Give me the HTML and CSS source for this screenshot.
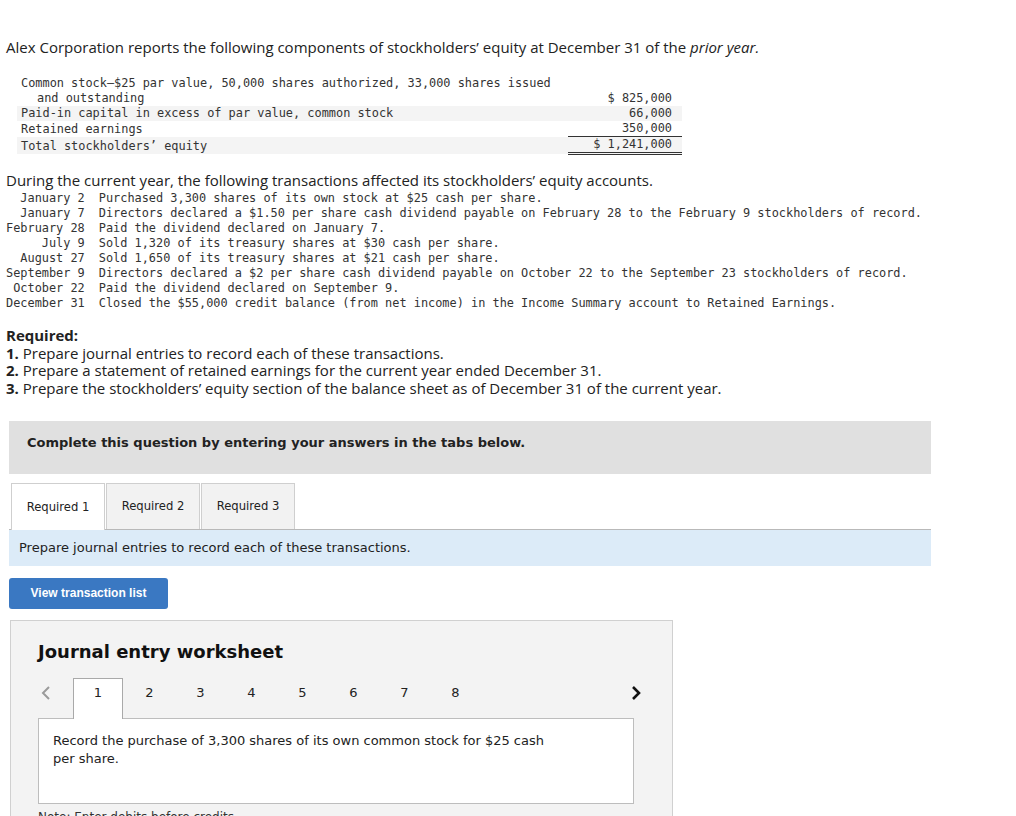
FILE: index.html
```html
<!DOCTYPE html>
<html lang="en">
<head>
<meta charset="utf-8">
<title>Alex Corporation</title>
<link rel="stylesheet" href="styles.css">
</head>
<body>
<main class="page">
  <p class="intro">Alex Corporation reports the following components of stockholders’ equity at December 31 of the <i>prior year.</i></p>

  <table class="equity">
    <colgroup><col class="col-label"><col class="col-amt"></colgroup>
    <tr>
      <td class="label">Common stock—$25 par value, 50,000 shares authorized, 33,000 shares issued<br><span class="indent">and outstanding</span></td>
      <td class="amt">$ 825,000</td>
    </tr>
    <tr class="stripe">
      <td class="label">Paid-in capital in excess of par value, common stock</td>
      <td class="amt">66,000</td>
    </tr>
    <tr>
      <td class="label">Retained earnings</td>
      <td class="amt under">350,000</td>
    </tr>
    <tr class="stripe">
      <td class="label">Total stockholders’ equity</td>
      <td class="amt double">$ 1,241,000</td>
    </tr>
  </table>

  <p class="during">During the current year, the following transactions affected its stockholders’ equity accounts.</p>
  <div class="tx">
    <span class="date">January 2</span><span>Purchased 3,300 shares of its own stock at $25 cash per share.</span>
    <span class="date">January 7</span><span>Directors declared a $1.50 per share cash dividend payable on February 28 to the February 9 stockholders of record.</span>
    <span class="date">February 28</span><span>Paid the dividend declared on January 7.</span>
    <span class="date">July 9</span><span>Sold 1,320 of its treasury shares at $30 cash per share.</span>
    <span class="date">August 27</span><span>Sold 1,650 of its treasury shares at $21 cash per share.</span>
    <span class="date">September 9</span><span>Directors declared a $2 per share cash dividend payable on October 22 to the September 23 stockholders of record.</span>
    <span class="date">October 22</span><span>Paid the dividend declared on September 9.</span>
    <span class="date">December 31</span><span>Closed the $55,000 credit balance (from net income) in the Income Summary account to Retained Earnings.</span>
  </div>

  <div class="required">
    <p class="req-title">Required:</p>
    <p><b>1.</b> Prepare journal entries to record each of these transactions.</p>
    <p><b>2.</b> Prepare a statement of retained earnings for the current year ended December 31.</p>
    <p><b>3.</b> Prepare the stockholders’ equity section of the balance sheet as of December 31 of the current year.</p>
  </div>

  <section class="widget">
    <div class="complete">Complete this question by entering your answers in the tabs below.</div>

    <div class="tabs">
      <div class="tab active">Required 1</div>
      <div class="tab">Required 2</div>
      <div class="tab">Required 3</div>
    </div>
    <div class="infobar">Prepare journal entries to record each of these transactions.</div>

    <button class="btn" type="button">View transaction list</button>

    <div class="worksheet">
      <h2 class="ws-title">Journal entry worksheet</h2>
      <div class="ws-nav">
        <span class="arrow prev"><svg width="12" height="16" viewBox="0 0 12 16"><path d="M9 2 L3 8 L9 14" fill="none" stroke="#9a9a9a" stroke-width="2"/></svg></span>
        <div class="ws-tabs">
          <span class="ws-tab active">1</span>
          <span class="ws-tab">2</span>
          <span class="ws-tab">3</span>
          <span class="ws-tab">4</span>
          <span class="ws-tab">5</span>
          <span class="ws-tab">6</span>
          <span class="ws-tab">7</span>
          <span class="ws-tab">8</span>
        </div>
        <span class="arrow next"><svg width="12" height="16" viewBox="0 0 12 16"><path d="M3 2 L9 8 L3 14" fill="none" stroke="#111" stroke-width="2.6"/></svg></span>
      </div>
      <div class="ws-box">
        <p>Record the purchase of 3,300 shares of its own common stock for $25 cash per share.</p>
      </div>
      <p class="note">Note: Enter debits before credits.</p>
    </div>
  </section>
</main>
</body>
</html>
```

FILE: styles.css
```css
* { box-sizing: border-box; }

html, body {
  margin: 0;
  padding: 0;
  background: #fff;
  overflow: hidden;
}

body {
  font-family: "Open Sans", "Liberation Sans", Arial, sans-serif;
  color: #222;
}

.page {
  padding: 38px 0 0 6px;
  height: 816px;
  overflow: hidden;
}

p { margin: 0; }

.intro {
  font-size: 15px;
  line-height: 18px;
}

.equity {
  margin: 20px 0 0 11px;
  border-collapse: collapse;
  table-layout: fixed;
  width: 665px;
  font-family: "DejaVu Sans Mono", monospace;
  font-size: 11.9px;
  line-height: 15px;
  color: #333;
}
.col-label { width: 551px; }
.col-amt { width: 114px; }

.equity td {
  padding: 0;
  vertical-align: bottom;
}
.equity .label { padding-left: 4px; white-space: nowrap; }
.equity .indent { padding-left: 16px; }
.equity .amt { text-align: right; padding-right: 10px; }
.equity .stripe td { background: #f4f4f4; }
.equity .under { border-bottom: 1px solid #333; }
.equity .double { border-bottom: 3px double #333; }

.during {
  margin-top: 16px;
  font-size: 15px;
  line-height: 18px;
}

.tx {
  margin-top: 2px;
  display: grid;
  grid-template-columns: max-content 1fr;
  column-gap: 14px;
  font-family: "DejaVu Sans Mono", monospace;
  font-size: 11.9px;
  line-height: 15px;
  color: #333;
}
.tx .date { text-align: right; white-space: nowrap; }

.required {
  margin-top: 16px;
  font-size: 15px;
  line-height: 17.7px;
}
.req-title { font-weight: bold; }

.widget {
  margin: 23px 0 0 3px;
  width: 922px;
  font-family: "DejaVu Sans", Verdana, sans-serif;
  color: #222;
}

.complete {
  background: #e0e0e0;
  height: 53px;
  padding: 14px 0 0 18px;
  font-size: 13px;
  line-height: 16px;
  font-weight: bold;
}

.tabs {
  margin-top: 9px;
  display: flex;
  gap: 1px;
  padding-left: 2px;
  border-bottom: 1px solid #b9b9b9;
  height: 47px;
}
.tab {
  width: 94px;
  height: 46px;
  display: flex;
  align-items: center;
  justify-content: center;
  font-size: 11.6px;
  background: #f2f2f2;
  border: 1px solid #cfcfcf;
  border-bottom: none;
}
.tab.active {
  background: #fff;
  height: 47px;
  position: relative;
  z-index: 1;
}

.infobar {
  background: #dcebf8;
  height: 36px;
  padding-left: 10px;
  display: flex;
  align-items: center;
  font-size: 13px;
}

.btn {
  display: block;
  margin-top: 12px;
  width: 159px;
  height: 31px;
  background: #3a78c2;
  color: #fff;
  border: none;
  border-radius: 3px;
  font-family: "Liberation Sans", Arial, sans-serif;
  font-size: 12px;
  font-weight: bold;
  padding: 0;
}

.worksheet {
  margin: 11px 0 0 1px;
  width: 663px;
  height: 220px;
  background: #f3f3f3;
  border: 1px solid #d0d0d0;
  padding: 0 0 0 27px;
}

.ws-title {
  margin: 19px 0 0 0;
  font-size: 18px;
  line-height: 24px;
  font-weight: bold;
  color: #111;
}

.ws-nav {
  margin-top: 14px;
  display: flex;
  align-items: flex-end;
  width: 606px;
  height: 40px;
}
.arrow {
  display: flex;
  align-items: flex-start;
  padding-top: 7px;
  height: 40px;
}
.arrow.prev { width: 35px; padding-left: 2px; }
.arrow.next { margin-left: auto; padding-right: 2px; }

.ws-tabs {
  display: flex;
  height: 40px;
}
.ws-tab {
  width: 51px;
  height: 40px;
  display: flex;
  justify-content: center;
  padding-top: 7px;
  font-size: 13px;
  line-height: 16px;
  color: #222;
}
.ws-tab.active {
  width: 50px;
  margin-right: 1px;
  background: #fff;
  border: 1px solid #a9a9a9;
  border-bottom: none;
  padding-top: 6px;
  height: 41px;
  position: relative;
  z-index: 1;
  margin-bottom: -1px;
}

.ws-box {
  width: 596px;
  height: 86px;
  background: #fff;
  border: 1px solid #bdbdbd;
  padding: 13px 14px 0 14px;
}
.ws-box p {
  width: 515px;
  font-size: 13px;
  line-height: 18px;
}

.note {
  margin-top: 6px;
  font-size: 12px;
  color: #333;
}
```
